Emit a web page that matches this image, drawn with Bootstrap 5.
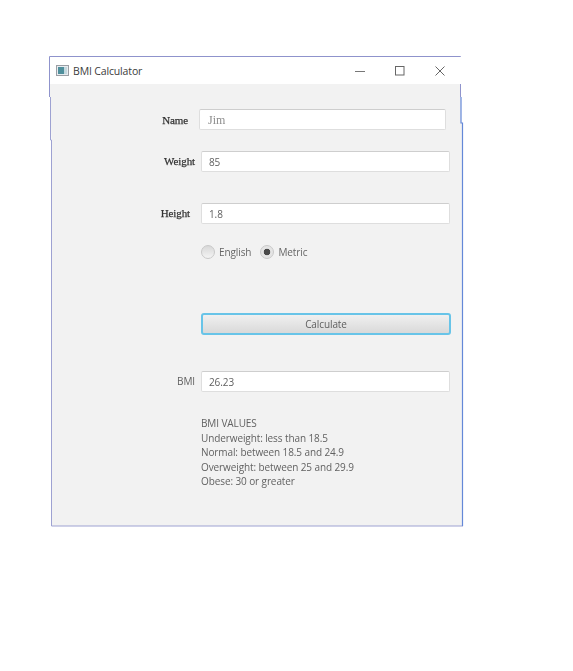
<!DOCTYPE html>
<html lang="en">
<head>
<meta charset="utf-8">
<title>BMI Calculator</title>
<link href="https://cdn.jsdelivr.net/npm/bootstrap@5.3.0/dist/css/bootstrap.min.css" rel="stylesheet">
<style>
html, body { background: #fff; }
body { margin: 0; font-family: "Open Sans", "Noto Sans", sans-serif; font-size: 10px; letter-spacing: -.1px; color: #5f5f5f; }
.stage { filter: blur(.35px); padding: 56px 0 0 49px; }
.appwin { position: relative; width: 415px; height: 472px; padding-top: 1px; }
.frame { position: absolute; left: 0; top: 0; width: 415px; height: 472px; }
.bar { position: relative; width: 411px; height: 27px; margin: 0 0 0 1px; background: #fff; }
.bar-title { font-size: 10.5px; color: #3c3c3c; letter-spacing: -.15px; margin-left: 4px; position: relative; top: 1px; }
.bar-icon { margin-left: 6px; }
.wctl { margin-left: auto; margin-right: 16px; gap: 30px; }
.fields { position: relative; padding-left: 102px; }
.row-name { margin-top: 25px; margin-left: -2px; width: 297px; }
.row-weight { margin-top: 21px; }
.row-height { margin-top: 31px; }
.row-bmi { margin-top: 36px; }
.lbl { width: 44px; flex: none; text-align: right; margin: 0; }
.serif { font-family: "Liberation Serif", serif; font-size: 11px; font-weight: 400; letter-spacing: -.1px; color: #333; -webkit-text-stroke: .25px #333; }
.plain { color: #5f5f5f; }
.row-name .lbl { padding: 1px 5px 0 0; }
.row-height .lbl { padding-right: 5px; }
.tfield.form-control { flex: none; height: 21px; min-height: 0; width: 249px; margin-left: 6px; padding: 0 7px; font-size: 10px; letter-spacing: -.1px; color: #5f5f5f; background: #fff; border: 1px solid #dedede; border-top-color: #cecece; border-radius: 2px; box-shadow: none; font-family: inherit; }
.row-name .tfield.form-control { width: 247px; font-family: "Liberation Serif", serif; font-size: 12px; letter-spacing: 0; color: #8c8c8c; padding: 1px 0 0 8px; }
.opts { padding-left: 50px; margin-top: 21px; height: 14px; }
.opts .form-check { margin: 0; padding: 0; min-height: 0; display: flex; align-items: center; }
.opts .form-check + .form-check { margin-left: 9px; }
.opts .form-check-input { float: none; margin: 0 4px 0 0; width: 14px; height: 14px; background: linear-gradient(#d8d8d8, #f4f4f4); border: 1px solid #c8c8c8; }
.opts .form-check-input:checked { background: radial-gradient(circle, #4a4a4a 0 3px, #e4e4e4 3.6px); border-color: #c8c8c8; }
.opts .form-check-label { color: #666; }
.go.btn { display: block; width: 250px; height: 22px; margin: 54px 0 0 50px; padding: 0; font-size: 10px; letter-spacing: -.1px; line-height: 18px; color: #5f5f5f; background: linear-gradient(#f0f0f0, #d9d9d9); border: 2px solid #68c4e8; border-radius: 3px; }
.legend { margin: 24px 0 0 50px; line-height: 14.5px; color: #626262; }
</style>
</head>
<body>
<div class="stage">
  <div class="appwin">
    <svg class="frame" viewBox="0 0 415 472" aria-hidden="true">
      <polygon points="1,1 412,1 412,67 414,67 414,470 2.5,470 2.5,84 1,41" fill="#f2f2f2"/>
      <polyline points="0.5,41 0.5,0.5 411.5,0.5 411.5,41" fill="none" stroke="#8f93cc"/>
      <polyline points="1.5,41 1.5,84 2.5,84 2.5,470 414,470" fill="none" stroke="#9ea2d2"/>
      <polyline points="412,41 412,67 413.5,67 413.5,470" fill="none" stroke="#6488d8" stroke-width="1.2"/>
    </svg>
    <div class="bar d-flex align-items-center">
      <svg class="bar-icon" width="13" height="11" viewBox="0 0 13 11" aria-hidden="true">
        <rect x=".5" y=".5" width="12" height="10" fill="#e8ecf0" stroke="#9a9ea4"/>
        <rect x="2" y="2" width="6" height="7" fill="#4f8f9c"/>
        <rect x="8" y="2" width="3" height="7" fill="#c4d8de"/>
      </svg>
      <span class="bar-title">BMI Calculator</span>
      <div class="wctl d-flex align-items-center">
        <svg width="10" height="10" viewBox="0 0 10 10" aria-hidden="true"><path d="M0 5.5h10" stroke="#777"/></svg>
        <svg width="10" height="10" viewBox="0 0 10 10" aria-hidden="true"><rect x=".5" y=".5" width="8.5" height="8.5" fill="none" stroke="#666"/></svg>
        <svg width="10" height="10" viewBox="0 0 10 10" aria-hidden="true"><path d="M.5.5l9 9M9.5.5l-9 9" stroke="#666"/></svg>
      </div>
    </div>
    <form class="fields">
      <div class="row-name d-flex align-items-center">
        <label class="lbl serif" for="fName">Name</label>
        <input id="fName" class="tfield form-control" type="text" value="Jim">
      </div>
      <div class="row-weight d-flex align-items-center">
        <label class="lbl serif" for="fWeight">Weight</label>
        <input id="fWeight" class="tfield form-control" type="text" value="85">
      </div>
      <div class="row-height d-flex align-items-center">
        <label class="lbl serif" for="fHeight">Height</label>
        <input id="fHeight" class="tfield form-control" type="text" value="1.8">
      </div>
      <div class="opts d-flex align-items-center">
        <div class="form-check">
          <input class="form-check-input" type="radio" name="units" id="uEn">
          <label class="form-check-label" for="uEn">English</label>
        </div>
        <div class="form-check">
          <input class="form-check-input" type="radio" name="units" id="uMe" checked>
          <label class="form-check-label" for="uMe">Metric</label>
        </div>
      </div>
      <button type="button" class="go btn">Calculate</button>
      <div class="row-bmi d-flex align-items-center">
        <label class="lbl plain" for="fBmi">BMI</label>
        <input id="fBmi" class="tfield form-control" type="text" value="26.23">
      </div>
      <div class="legend">
        BMI VALUES<br>
        Underweight: less than 18.5<br>
        Normal: between 18.5 and 24.9<br>
        Overweight: between 25 and 29.9<br>
        Obese: 30 or greater
      </div>
    </form>
  </div>
</div>
<script src="https://cdn.jsdelivr.net/npm/bootstrap@5.3.0/dist/js/bootstrap.bundle.min.js"></script>
</body>
</html>
